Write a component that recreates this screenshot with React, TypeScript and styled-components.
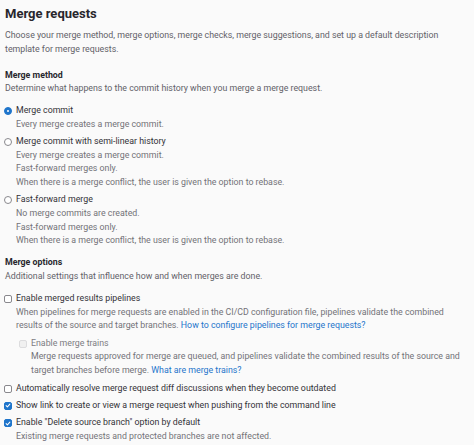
import React from "react";
import styled, { createGlobalStyle } from "styled-components";

const Global = createGlobalStyle`
  html, body { margin: 0; padding: 0; background: #fafafa; }
  body { font-family: Roboto, "Liberation Sans", Arial, sans-serif; color: #333238; }
`;

const Page = styled.div`
  background: #fafafa;
  padding: 5px 4px 0 4px;
  width: 470px;
  box-sizing: border-box;
  font-size: 8.8px;
  line-height: 13.8px;
  white-space: nowrap;
`;

const Title = styled.h2`
  margin: 0;
  font-size: 13px;
  line-height: 18px;
  font-weight: 700;
  color: #28272d;
  padding-left: 1px;
`;

const Lead = styled.p`
  margin: 6px 0 0 1px;
  color: #626168;
`;

const Section = styled.section<{ $top: number }>`
  margin-top: ${(p) => p.$top}px;
`;

const Heading = styled.h3`
  margin: 0 0 0 1px;
  font-size: 8.8px;
  line-height: 13.8px;
  font-weight: 700;
  color: #28272d;
`;

const Sub = styled.p`
  margin: 0 0 0 1px;
  color: #626168;
`;

const Options = styled.div<{ $gap: number }>`
  display: flex;
  flex-direction: column;
  gap: ${(p) => p.$gap}px;
  margin-top: 8px;
`;

const Option = styled.div<{ $indent?: boolean }>`
  display: grid;
  grid-template-columns: 12px 1fr;
  align-items: start;
  margin-left: ${(p) => (p.$indent ? 15 : 0)}px;
`;

const Label = styled.div<{ $disabled?: boolean }>`
  color: ${(p) => (p.$disabled ? "#7d7c82" : "#333238")};
`;

const Help = styled.div`
  grid-column: 2;
  color: #737278;
`;

const Link = styled.a`
  color: #1f75cb;
  text-decoration: none;
`;

const Radio = styled.span<{ $checked?: boolean }>`
  width: 8px;
  height: 8px;
  margin-top: 3px;
  border-radius: 50%;
  box-sizing: border-box;
  border: 1px solid ${(p) => (p.$checked ? "#1f75cb" : "#89888d")};
  background: ${(p) => (p.$checked ? "#1f75cb" : "#fff")};
  display: flex;
  align-items: center;
  justify-content: center;
  &::after {
    content: "";
    display: ${(p) => (p.$checked ? "block" : "none")};
    width: 2.5px;
    height: 2.5px;
    border-radius: 50%;
    background: #fff;
  }
`;

const Box = styled.span<{ $checked?: boolean; $disabled?: boolean }>`
  width: 8px;
  height: 8px;
  margin-top: 3px;
  border-radius: 2px;
  box-sizing: border-box;
  border: 1px solid
    ${(p) => (p.$checked ? "#1f75cb" : p.$disabled ? "#dcdcde" : "#89888d")};
  background: ${(p) =>
    p.$checked ? "#1f75cb" : p.$disabled ? "#f0f0f0" : "#fff"};
  display: flex;
  align-items: center;
  justify-content: center;
`;

const Check = () => (
  <svg width="7" height="7" viewBox="0 0 8 8">
    <path d="M1.5 4.2 L3.2 5.8 L6.5 2.2" fill="none" stroke="#fff" strokeWidth="1.4" strokeLinecap="round" strokeLinejoin="round" />
  </svg>
);

export default function App() {
  return (
    <>
      <Global />
      <Page>
        <Title>Merge requests</Title>
        <Lead>
          Choose your merge method, merge options, merge checks, merge suggestions, and set up a default description
          <br />
          template for merge requests.
        </Lead>

        <Section $top={12}>
          <Heading>Merge method</Heading>
          <Sub>Determine what happens to the commit history when you merge a merge request.</Sub>
          <Options $gap={3}>
            <Option>
              <Radio $checked />
              <Label>Merge commit</Label>
              <Help>Every merge creates a merge commit.</Help>
            </Option>
            <Option>
              <Radio />
              <Label>Merge commit with semi-linear history</Label>
              <Help>
                Every merge creates a merge commit.
                <br />
                Fast-forward merges only.
                <br />
                When there is a merge conflict, the user is given the option to rebase.
              </Help>
            </Option>
            <Option>
              <Radio />
              <Label>Fast-forward merge</Label>
              <Help>
                No merge commits are created.
                <br />
                Fast-forward merges only.
                <br />
                When there is a merge conflict, the user is given the option to rebase.
              </Help>
            </Option>
          </Options>
        </Section>

        <Section $top={8}>
          <Heading>Merge options</Heading>
          <Sub>Additional settings that influence how and when merges are done.</Sub>
          <Options $gap={3.5}>
            <Option>
              <Box />
              <Label>Enable merged results pipelines</Label>
              <Help>
                When pipelines for merge requests are enabled in the CI/CD configuration file, pipelines validate the combined
                <br />
                results of the source and target branches.{" "}
                <Link href="#">How to configure pipelines for merge requests?</Link>
              </Help>
            </Option>
            <Option $indent>
              <Box $disabled />
              <Label $disabled>Enable merge trains</Label>
              <Help>
                Merge requests approved for merge are queued, and pipelines validate the combined results of the source and
                <br />
                target branches before merge. <Link href="#">What are merge trains?</Link>
              </Help>
            </Option>
            <Option>
              <Box />
              <Label>Automatically resolve merge request diff discussions when they become outdated</Label>
            </Option>
            <Option>
              <Box $checked>
                <Check />
              </Box>
              <Label>Show link to create or view a merge request when pushing from the command line</Label>
            </Option>
            <Option>
              <Box $checked>
                <Check />
              </Box>
              <Label>Enable "Delete source branch" option by default</Label>
              <Help>Existing merge requests and protected branches are not affected.</Help>
            </Option>
          </Options>
        </Section>
      </Page>
    </>
  );
}
